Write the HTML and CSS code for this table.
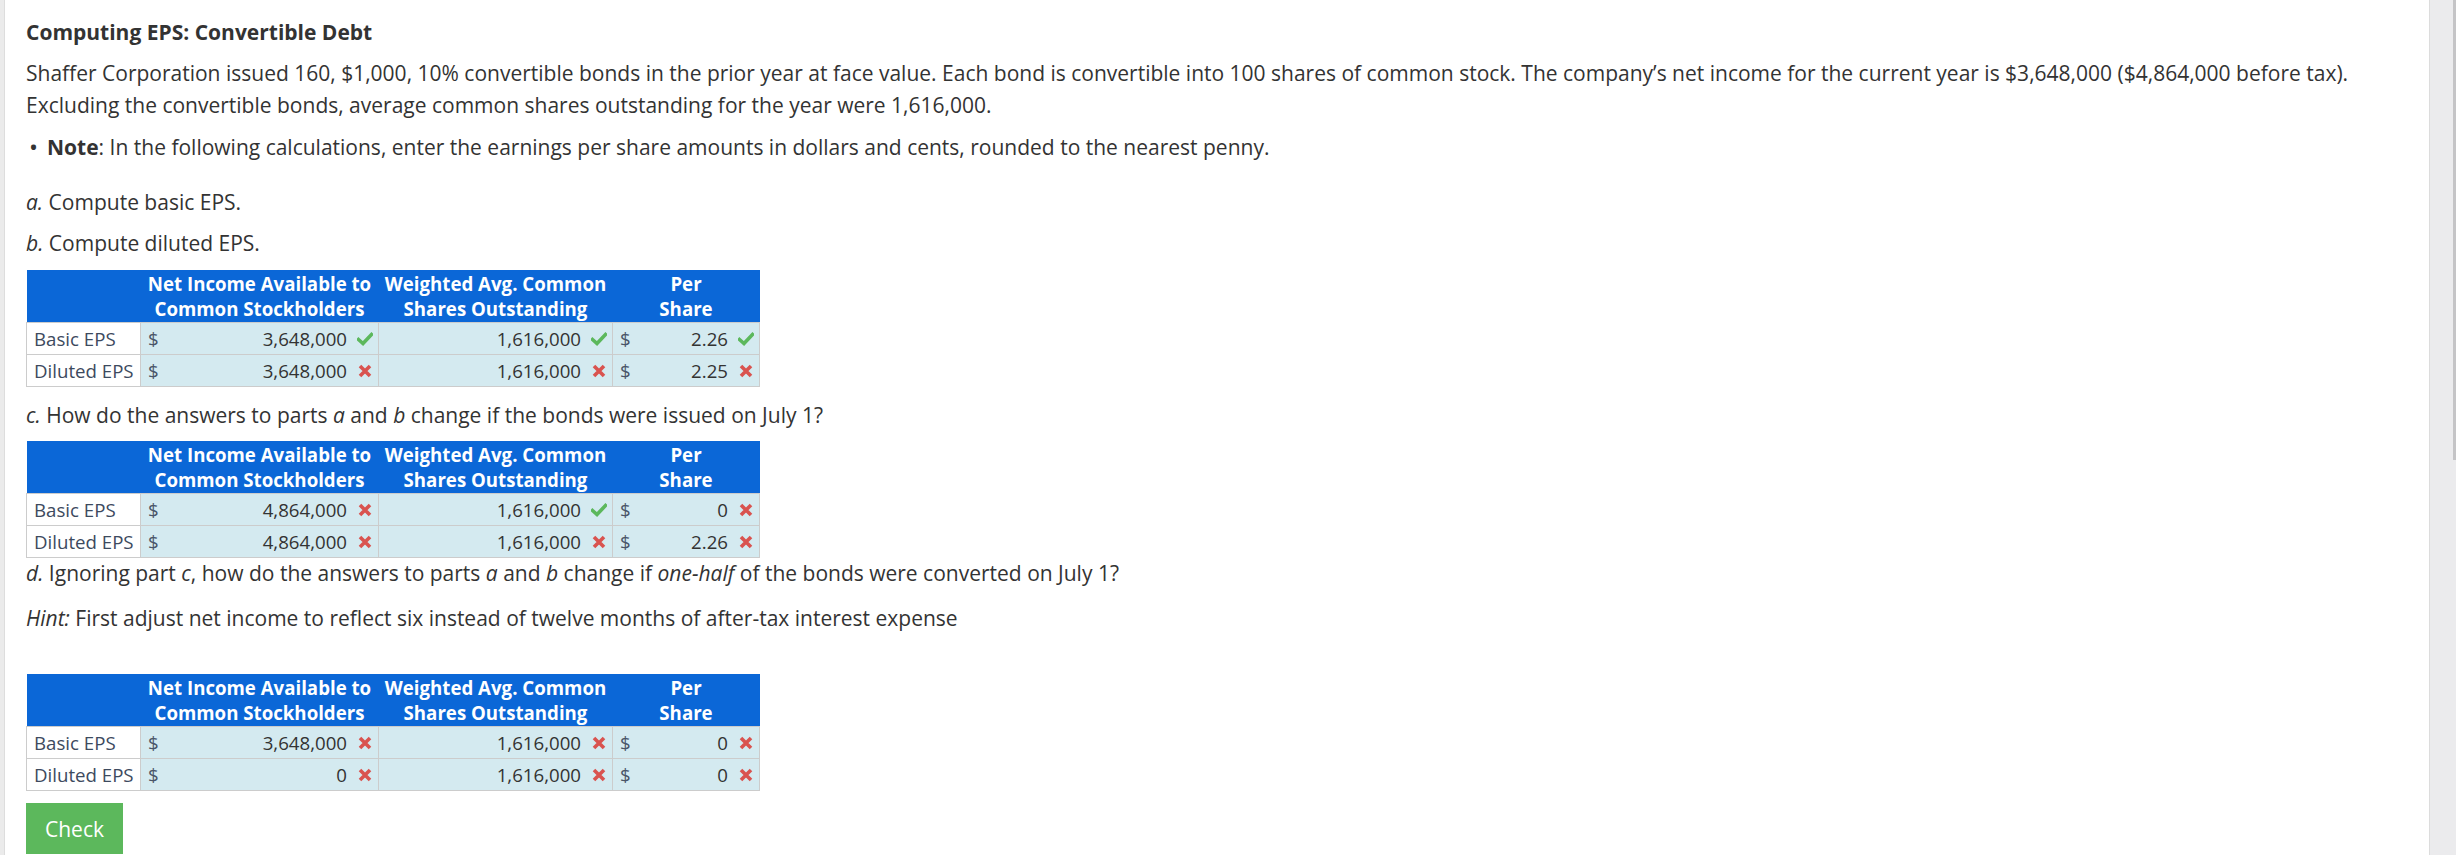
FILE: index.html
```html
<!DOCTYPE html>
<html>
<head>
<meta charset="utf-8">
<link rel="stylesheet" href="styles.css">
</head>
<body>
<div class="page">
  <div class="edge"></div>
  <main class="content">
    <h1 class="title">Computing EPS: Convertible Debt</h1>
    <p class="intro">Shaffer Corporation issued 160, $1,000, 10% convertible bonds in the prior year at face value. Each bond is convertible into 100 shares of common stock. The company’s net income for the current year is $3,648,000 ($4,864,000 before tax). Excluding the convertible bonds, average common shares outstanding for the year were 1,616,000.</p>
    <div class="note"><span class="bullet">•</span><span><b>Note</b>: In the following calculations, enter the earnings per share amounts in dollars and cents, rounded to the nearest penny.</span></div>

    <p class="q qa"><i>a.</i> Compute basic EPS.</p>
    <p class="q qb"><i>b.</i> Compute diluted EPS.</p>

    <table class="eps">
      <colgroup><col class="c1"><col class="c2"><col class="c3"><col class="c4"></colgroup>
      <thead>
        <tr><th></th><th>Net Income Available to<br>Common Stockholders</th><th>Weighted Avg. Common<br>Shares Outstanding</th><th>Per<br>Share</th></tr>
      </thead>
      <tbody>
        <tr><td class="lbl">Basic EPS</td>
          <td><div class="val"><span class="cur">$</span><span class="num">3,648,000</span><svg class="ok" viewBox="0 0 16 16"><path d="M1.5 8.5 L6 12.5 L14.5 3.5"/></svg></div></td>
          <td><div class="val"><span class="num">1,616,000</span><svg class="ok" viewBox="0 0 16 16"><path d="M1.5 8.5 L6 12.5 L14.5 3.5"/></svg></div></td>
          <td><div class="val"><span class="cur">$</span><span class="num">2.26</span><svg class="ok" viewBox="0 0 16 16"><path d="M1.5 8.5 L6 12.5 L14.5 3.5"/></svg></div></td>
        </tr>
        <tr><td class="lbl">Diluted EPS</td>
          <td><div class="val"><span class="cur">$</span><span class="num">3,648,000</span><svg class="bad" viewBox="0 0 16 16"><path d="M3 3 L13 13 M13 3 L3 13"/></svg></div></td>
          <td><div class="val"><span class="num">1,616,000</span><svg class="bad" viewBox="0 0 16 16"><path d="M3 3 L13 13 M13 3 L3 13"/></svg></div></td>
          <td><div class="val"><span class="cur">$</span><span class="num">2.25</span><svg class="bad" viewBox="0 0 16 16"><path d="M3 3 L13 13 M13 3 L3 13"/></svg></div></td>
        </tr>
      </tbody>
    </table>

    <p class="q qc"><i>c.</i> How do the answers to parts <i>a</i> and <i>b</i> change if the bonds were issued on July 1?</p>

    <table class="eps">
      <colgroup><col class="c1"><col class="c2"><col class="c3"><col class="c4"></colgroup>
      <thead>
        <tr><th></th><th>Net Income Available to<br>Common Stockholders</th><th>Weighted Avg. Common<br>Shares Outstanding</th><th>Per<br>Share</th></tr>
      </thead>
      <tbody>
        <tr><td class="lbl">Basic EPS</td>
          <td><div class="val"><span class="cur">$</span><span class="num">4,864,000</span><svg class="bad" viewBox="0 0 16 16"><path d="M3 3 L13 13 M13 3 L3 13"/></svg></div></td>
          <td><div class="val"><span class="num">1,616,000</span><svg class="ok" viewBox="0 0 16 16"><path d="M1.5 8.5 L6 12.5 L14.5 3.5"/></svg></div></td>
          <td><div class="val"><span class="cur">$</span><span class="num">0</span><svg class="bad" viewBox="0 0 16 16"><path d="M3 3 L13 13 M13 3 L3 13"/></svg></div></td>
        </tr>
        <tr><td class="lbl">Diluted EPS</td>
          <td><div class="val"><span class="cur">$</span><span class="num">4,864,000</span><svg class="bad" viewBox="0 0 16 16"><path d="M3 3 L13 13 M13 3 L3 13"/></svg></div></td>
          <td><div class="val"><span class="num">1,616,000</span><svg class="bad" viewBox="0 0 16 16"><path d="M3 3 L13 13 M13 3 L3 13"/></svg></div></td>
          <td><div class="val"><span class="cur">$</span><span class="num">2.26</span><svg class="bad" viewBox="0 0 16 16"><path d="M3 3 L13 13 M13 3 L3 13"/></svg></div></td>
        </tr>
      </tbody>
    </table>

    <p class="q qd"><i>d.</i> Ignoring part <i>c</i>, how do the answers to parts <i>a</i> and <i>b</i> change if <i>one-half</i> of the bonds were converted on July 1?</p>
    <p class="q qh"><i>Hint:</i> First adjust net income to reflect six instead of twelve months of after-tax interest expense</p>

    <table class="eps t3">
      <colgroup><col class="c1"><col class="c2"><col class="c3"><col class="c4"></colgroup>
      <thead>
        <tr><th></th><th>Net Income Available to<br>Common Stockholders</th><th>Weighted Avg. Common<br>Shares Outstanding</th><th>Per<br>Share</th></tr>
      </thead>
      <tbody>
        <tr><td class="lbl">Basic EPS</td>
          <td><div class="val"><span class="cur">$</span><span class="num">3,648,000</span><svg class="bad" viewBox="0 0 16 16"><path d="M3 3 L13 13 M13 3 L3 13"/></svg></div></td>
          <td><div class="val"><span class="num">1,616,000</span><svg class="bad" viewBox="0 0 16 16"><path d="M3 3 L13 13 M13 3 L3 13"/></svg></div></td>
          <td><div class="val"><span class="cur">$</span><span class="num">0</span><svg class="bad" viewBox="0 0 16 16"><path d="M3 3 L13 13 M13 3 L3 13"/></svg></div></td>
        </tr>
        <tr><td class="lbl">Diluted EPS</td>
          <td><div class="val"><span class="cur">$</span><span class="num">0</span><svg class="bad" viewBox="0 0 16 16"><path d="M3 3 L13 13 M13 3 L3 13"/></svg></div></td>
          <td><div class="val"><span class="num">1,616,000</span><svg class="bad" viewBox="0 0 16 16"><path d="M3 3 L13 13 M13 3 L3 13"/></svg></div></td>
          <td><div class="val"><span class="cur">$</span><span class="num">0</span><svg class="bad" viewBox="0 0 16 16"><path d="M3 3 L13 13 M13 3 L3 13"/></svg></div></td>
        </tr>
      </tbody>
    </table>

    <button class="check">Check</button>
  </main>
  <div class="scroll"><div class="thumb"></div></div>
</div>
</body>
</html>
```

FILE: styles.css
```css
* { box-sizing: border-box; }
html, body { margin: 0; padding: 0; }
body {
  background: #ffffff;
  font-family: "Open Sans", "Liberation Sans", sans-serif;
  color: #333333;
  font-size: 21px;
  overflow: hidden;
}
.page {
  display: flex;
  height: 855px;
}
.edge {
  width: 5px;
  background: #ebebeb;
  border-right: 1px solid #dddddd;
}
.content {
  flex: 1;
  padding: 0 0 0 21px;
}
.scroll {
  width: 27px;
  background: #ebebed;
  border-left: 1px solid #dcdcdc;
  display: flex;
  justify-content: flex-end;
}
.thumb {
  width: 3px;
  height: 460px;
  background: #c4c4c6;
}
.title {
  margin: 18px 0 0;
  font-size: 21px;
  font-weight: 700;
  line-height: 28px;
}
.intro {
  margin: 11px 0 0;
  line-height: 32px;
}
.note {
  display: flex;
  margin-top: 10px;
  line-height: 32px;
}
.bullet {
  width: 21px;
  padding-left: 3px;
  font-size: 24px;
}
.q { margin: 0; line-height: 32px; }
.qa { margin-top: 23px; }
.qb { margin-top: 9px; }
.qc { margin-top: 12px; }
.qd { margin-top: 0; line-height: 30px; }
.qh { margin-top: 14px; }

.eps {
  border-collapse: collapse;
  width: 733px;
  table-layout: fixed;
  margin-top: 11px;
  font-size: 18.67px;
}
.qc + .eps { margin-top: 10px; }
.eps.t3 { margin-top: 40px; }
.c1 { width: 114px; }
.c2 { width: 238px; }
.c3 { width: 234px; }
.c4 { width: 147px; }
.eps th {
  background: #0b67d7;
  color: #ffffff;
  font-weight: 700;
  line-height: 25px;
  padding: 1px 0;
  text-align: center;
  white-space: nowrap;
}
.eps td {
  border: 1px solid #cccccc;
  background: #d4eaf0;
  padding: 0;
  height: 32px;
  line-height: 24px;
}
.eps td.lbl {
  background: #ffffff;
  color: #3d4a5e;
  padding-left: 7px;
  white-space: nowrap;
}
.val {
  display: flex;
  align-items: center;
  padding: 0 5px 0 7px;
}
.cur { color: #4a5568; }
.num {
  flex: 1;
  text-align: right;
  padding-right: 10px;
}
.val svg {
  width: 16px;
  height: 16px;
  fill: none;
  stroke-width: 3.6;
}
.ok { stroke: #5cb85c; stroke-linecap: square; }
.bad { stroke: #d9534f; stroke-linecap: butt; }
.check {
  display: block;
  margin-top: 12px;
  width: 97px;
  height: 51px;
  border: 0;
  background: #5cb85c;
  color: #ffffff;
  font-family: "Open Sans", "Liberation Sans", sans-serif;
  font-size: 21px;
  padding: 0;
}
```
